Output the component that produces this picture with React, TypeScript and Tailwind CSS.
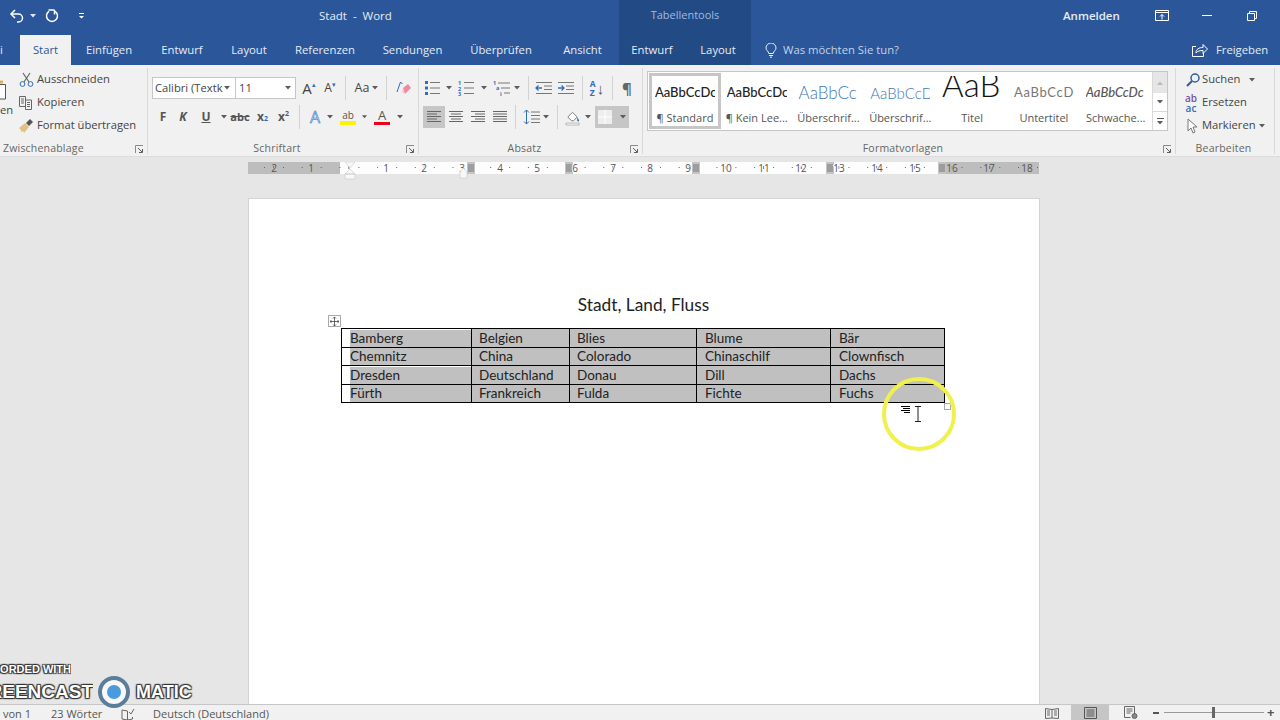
import type { ReactNode } from "react";

const ui = "font-['Open_Sans','Noto_Sans',sans-serif]";
const doc = "font-['Lato','Open_Sans',sans-serif]";

const Caret = ({ light }: { light?: boolean }) => (
  <svg width="6" height="4" viewBox="0 0 6 4">
    <path d="M0 0h6L3 3.5z" fill={light ? "#dfe7f3" : "#5c5c5c"} />
  </svg>
);

const Sep = () => <span className="block h-[24px] w-px bg-[#d2d2d2]" />;

function Slot({ className, children }: { className: string; children?: ReactNode }) {
  return <span className={`flex h-full shrink-0 items-center justify-center ${className}`}>{children}</span>;
}

function Lines({ rows, stroke = "#666" }: { rows: [number, number][]; stroke?: string }) {
  return (
    <svg width="16" height="14" viewBox="0 0 16 14">
      {rows.map(([x1, x2], i) => (
        <path key={i} d={`M${x1} ${1.5 + i * 2.5}H${x2}`} stroke={stroke} strokeWidth="1" />
      ))}
    </svg>
  );
}

function ListIcon({ marks }: { marks: string }) {
  return (
    <svg width="18" height="18" viewBox="0 0 18 18">
      <path d="M6 3.500h10M6 9h10M6 14.500h10" stroke="#777" />
      {marks === "dots" ? (
        <path d="M1 2h3v3H1zM1 7.500h3v3H1zM1 13h3v3H1z" fill="#2f6fb7" />
      ) : (
        <>
          <text x="0" y="6" fontSize="5.500" fill="#2f6fb7" fontWeight="700">1</text>
          <text x="0" y="11.500" fontSize="5.500" fill="#2f6fb7" fontWeight="700">2</text>
          <text x="0" y="17" fontSize="5.500" fill="#2f6fb7" fontWeight="700">3</text>
        </>
      )}
    </svg>
  );
}

function IndentIcon({ flip }: { flip?: boolean }) {
  return (
    <svg width="18" height="14" viewBox="0 0 18 14">
      <path d="M1 1.500h16M9 5h8M9 8.500h8M1 12.500h16" stroke="#777" />
      <path d={flip ? "M1 7h6M4.500 4.500 7 7l-2.500 2.500" : "M7 7H1M3.500 4.500 1 7l2.500 2.500"} stroke="#2f6fb7" strokeWidth="1.300" fill="none" />
    </svg>
  );
}

function Launcher() {
  return (
    <svg width="9" height="9" viewBox="0 0 9 9" className="shrink-0">
      <path d="M.5 8V.5H8" stroke="#8a8a8a" fill="none" />
      <path d="M3 3l4 4M7.500 4v3.500H4" stroke="#5c5c5c" fill="none" />
    </svg>
  );
}

function Group({ className, label, labelClass = "justify-center", launcher, children }: {
  className: string;
  label: string;
  labelClass?: string;
  launcher?: boolean;
  children: ReactNode;
}) {
  return (
    <div className={`flex shrink-0 flex-col ${className}`}>
      <div className="h-[74px] shrink-0 overflow-hidden">{children}</div>
      <div className="mt-[1px] flex h-[18px] shrink-0 items-center pr-[3px]">
        <div className={`flex flex-1 text-[10.500px] tracking-[0.2px] text-[#666] ${labelClass}`}>{label}</div>
        {launcher && <Launcher />}
      </div>
    </div>
  );
}

const divider = <span className="my-[3px] block h-[86px] w-px shrink-0 bg-[#d9d9d9]" />;

function StyleItem({ preview, label, selected }: { preview: ReactNode; label: string; selected?: boolean }) {
  return (
    <div className={`flex h-[56px] w-[71.8px] shrink-0 flex-col items-center overflow-hidden border-[3px] ${selected ? "border-[#c6c6c6]" : "border-transparent"}`}>
      <div className="flex h-[34px] w-[60px] items-center justify-start overflow-hidden whitespace-nowrap text-[#222]">{preview}</div>
      <div className="whitespace-nowrap text-[11px] leading-[16px] text-[#555]">{label}</div>
    </div>
  );
}

function Ruler() {
  const nums: [string, number][] = [
    ["2", 274], ["1", 311], ["1", 386], ["2", 424], ["3", 462], ["4", 500], ["5", 537], ["6", 575], ["7", 613],
    ["8", 650], ["9", 688], ["10", 726], ["11", 764], ["12", 801], ["13", 839], ["14", 877], ["15", 915], ["16", 952], ["17", 989], ["18", 1027],
  ];
  const markers = [467, 565, 692, 826, 938];
  return (
    <svg width="792" height="20" viewBox="248 162 792 20" className="ml-[248px] block">
      <rect x="248" y="162" width="92" height="12" fill="#bdbdbd" />
      <rect x="340" y="162" width="598" height="12" fill="#fdfdfd" />
      <rect x="938" y="162" width="101" height="12" fill="#bdbdbd" />
      {Array.from({ length: 21 }, (_, i) => 255 + i * 37.7).map((x, i) => (
        <g key={i} stroke="#666">
          <path d={`M${x + 9} 167.500h1M${x + 28} 167.500h1`} />
          <path d={`M${x + 18.500} 166v3`} />
        </g>
      ))}
      {markers.map((x) => (
        <g key={x}>
          <rect x={x} y="162" width="8" height="12" fill="#c4c4c4" />
          <path d={`M${x + 2} 164v8M${x + 4} 164v8M${x + 6} 164v8`} stroke="#777" />
        </g>
      ))}
      {nums.map(([n, x], i) => (
        <text key={i} x={x} y="171.500" fontSize="10" textAnchor="middle" fill="#555" stroke={i < 2 || i >= 17 ? "#bdbdbd" : "#fdfdfd"} strokeWidth="2" paintOrder="stroke" fontFamily="Open Sans">{n}</text>
      ))}
      <path d="M345 162h10l-5 6zM345 174h10v5h-10zM350 169l5 5h-10z" fill="#f8f8f8" stroke="#c8c8c8" strokeWidth=".6" />
      <path d="M460 172l3.500-4 3.500 4v6h-7z" fill="#f8f8f8" stroke="#c8c8c8" strokeWidth=".6" />
    </svg>
  );
}

const rows = [
  ["Bamberg", "Belgien", "Blies", "Blume", "Bär"],
  ["Chemnitz", "China", "Colorado", "Chinaschilf", "Clownfisch"],
  ["Dresden", "Deutschland", "Donau", "Dill", "Dachs"],
  ["Fürth", "Frankreich", "Fulda", "Fichte", "Fuchs"],
];
const rowHeights = ["h-[19px]", "h-[18px]", "h-[19px]", "h-[18px]"];

const tabs: [string, string][] = [
  ["Einfügen", "w-[76px]"],
  ["Entwurf", "w-[70px]"],
  ["Layout", "w-[64px]"],
  ["Referenzen", "w-[88px]"],
  ["Sendungen", "w-[87px]"],
  ["Überprüfen", "w-[90px]"],
  ["Ansicht", "w-[73px]"],
];

export default function App() {
  return (
    <div className={`relative flex h-screen w-[1280px] flex-col overflow-hidden bg-[#e6e6e6] ${ui}`}>
      {/* title bar */}
      <header className="flex h-[35px] shrink-0 bg-[#2b579a] text-[11.500px] text-[#e6ecf5]">
        <div className="flex w-[619px] items-center pb-[4px]">
          <Slot className="ml-[8px] w-[18px]">
            <svg width="16" height="14" viewBox="0 0 16 14" fill="none" stroke="#fff" strokeWidth="1.500">
              <path d="M6 1 2 5l4 4" />
              <path d="M2 5h7.500a4 4 0 0 1 0 8H8" />
            </svg>
          </Slot>
          <Slot className="ml-[3px] w-[8px]"><Caret light /></Slot>
          <Slot className="ml-[6px] w-[18px]">
            <svg width="14" height="14" viewBox="0 0 14 14" fill="none" stroke="#fff" strokeWidth="1.500">
              <path d="M4 2.300a5.500 5.500 0 1 0 6 0" />
              <path d="M3.500 1H9.500M9.500 1v4.500" />
            </svg>
          </Slot>
          <Slot className="ml-[16px] w-[8px]">
            <svg width="7" height="7" viewBox="0 0 7 7">
              <path d="M1 1h5v1H1zM1 4h5L3.500 6.500z" fill="#fff" />
            </svg>
          </Slot>
          <span className="ml-[234px] whitespace-pre">Stadt  -  Word</span>
        </div>
        <div className="flex w-[132px] items-center justify-center bg-[#224a84] pb-[4px] text-[11px] text-[#9fbbe4]">Tabellentools</div>
        <div className="flex flex-1 items-center pb-[4px]">
          <span className="ml-[312px] font-semibold text-[11.500px]">Anmelden</span>
          <Slot className="ml-[35px] w-[14px]">
            <svg width="14" height="12" viewBox="0 0 14 12" fill="none" stroke="#fff">
              <path d="M.5.500h13v10H.5zM.5 2.500h13M7 9.500V4.500M5 6.500l2-2 2 2" />
            </svg>
          </Slot>
          <Slot className="ml-[33px] w-[11px]"><span className="block h-px w-[10px] bg-white" /></Slot>
          <Slot className="ml-[34px] w-[11px]">
            <svg width="10" height="10" viewBox="0 0 10 10" fill="none" stroke="#fff">
              <path d="M.5 2.500h7v7h-7zM2.500 2.500v-2h7v7h-2" />
            </svg>
          </Slot>
        </div>
      </header>

      {/* tabs */}
      <nav className="flex h-[30px] shrink-0 items-stretch bg-[#2b579a] text-[11.300px] text-[#e6ecf5]">
        <div className="flex w-[20px] items-center justify-start overflow-hidden pl-0">i</div>
        <div className="flex w-[51px] items-center justify-center bg-[#f1f1f1] text-[#2b579a]">Start</div>
        {tabs.map(([t, w]) => (
          <div key={t} className={`flex items-center justify-center ${w}`}>{t}</div>
        ))}
        <div className="flex w-[132px] bg-[#224a84]">
          <div className="flex w-[66px] items-center justify-center">Entwurf</div>
          <div className="flex w-[66px] items-center justify-center">Layout</div>
        </div>
        <div className="ml-[14px] flex items-center text-[#c3d3ea]">
          <svg width="12" height="15" viewBox="0 0 12 15" fill="none" stroke="#fff" strokeWidth=".900">
            <path d="M3.800 10.500C3.500 8 1 7.500 1 5a5 5 0 0 1 10 0c0 2.500-2.500 3-2.800 5.500zM4 12.500h4M5 14.200h2" />
          </svg>
          <span className="ml-[6px]">Was möchten Sie tun?</span>
        </div>
        <div className="ml-[293px] flex items-center">
          <svg width="16" height="14" viewBox="0 0 16 14" fill="none" stroke="#fff">
            <path d="M4 3.500H.5v10h11V10" />
            <path d="M4 10c0-4 3-5.500 7-5.500V1.500l4.500 4.500L11 10.500V7.500C8 7.500 5.500 8 4 10z" />
          </svg>
          <span className="ml-[8px]">Freigeben</span>
        </div>
      </nav>

      {/* ribbon */}
      <section className="flex h-[92px] shrink-0 border-b border-[#dcdcdc] bg-[#f1f1f1] text-[#444]">
        <Group className="w-[147px]" label="Zwischenablage" labelClass="justify-start pl-[3px]" launcher>
          <div className="flex h-full">
            <div className="flex w-[19px] flex-col pt-[15px] text-[11.200px] text-[#444]">
              <svg width="6" height="20" viewBox="0 0 6 20">
                <path d="M0 .500h3v3H0z" fill="#d9b25f" />
                <path d="M0 4.500h5.500V19H0" fill="#fff" stroke="#555" />
              </svg>
              <span className="mt-[3px] leading-[14px]">en</span>
            </div>
            <div className="flex flex-col pt-[3px] text-[11.200px]">
              {[
                ["Ausschneiden", <svg key="c" width="15" height="15" viewBox="0 0 15 15" fill="none"><path d="M4 1l6 9M11 1 5 10" stroke="#666" strokeWidth="1.200" /><circle cx="3.500" cy="12" r="2.400" stroke="#2f6fb7" /><circle cx="11.500" cy="12" r="2.400" stroke="#2f6fb7" /></svg>],
                ["Kopieren", <svg key="k" width="15" height="14" viewBox="0 0 15 14" fill="none" stroke="#666"><path d="M.5.500h6v10h-6zM2 3h3M2 5h3M2 7h3M6.500 4h6v9.500h-6zM8 6.500h3M8 8.500h3M8 10.500h3" /></svg>],
                ["Format übertragen", <svg key="f" width="15" height="14" viewBox="0 0 15 14"><path d="M0 9l6-5 4 4-5 6-1-2-2 1 0-2z" fill="#e2c27c" /><path d="M7 4l4-4 3 3-4 4z" fill="#555" /></svg>],
              ].map(([t, icon]) => (
                <div key={t as string} className="flex h-[23px] items-center">
                  <span className="flex w-[18px] items-center justify-start">{icon}</span>
                  <span className="whitespace-nowrap">{t}</span>
                </div>
              ))}
            </div>
          </div>
        </Group>
        {divider}
        <Group className="w-[270px]" label="Schriftart" launcher>
          <div className="pl-[4px] pt-[12px]">
            <div className="flex h-[22px] items-center">
              <div className="flex h-[22px] w-[84px] items-center justify-between border border-[#c6c6c6] bg-white pl-[2px] pr-[5px] text-[11.200px]">
                <span className="w-[68px] overflow-hidden whitespace-nowrap">Calibri (Textk</span>
                <Caret />
              </div>
              <div className="flex h-[22px] w-[60px] items-center justify-between border border-l-0 border-[#c6c6c6] bg-white pl-[3px] pr-[4px] text-[11.200px]">
                <span>11</span>
                <Caret />
              </div>
              <Slot className="w-[26px] text-[15px]">A<sup className="text-[7px] text-[#2f6fb7]">▴</sup></Slot>
              <Slot className="w-[16px] text-[12px]">A<sup className="text-[7px] text-[#2f6fb7]">▾</sup></Slot>
              <Slot className="w-[14px]"><Sep /></Slot>
              <Slot className="w-[20px] text-[12.500px]">Aa</Slot>
              <Slot className="w-[6px]"><Caret /></Slot>
              <Slot className="w-[16px]"><Sep /></Slot>
              <Slot className="w-[18px]">
                <svg width="15" height="15" viewBox="0 0 15 15">
                  <path d="M7 7l5-4 3 4-6 6z" fill="#ef8aa0" />
                  <path d="M1 11 4.500 1l2 2" stroke="#2f6fb7" fill="none" />
                  <path d="M7 7l-1 4 3 2z" fill="#f5c4cf" />
                </svg>
              </Slot>
            </div>
            <div className="mt-[7px] flex h-[22px] items-center text-[12px] font-bold text-[#555]">
              <Slot className="w-[22px]">F</Slot>
              <Slot className="w-[18px] italic">K</Slot>
              <Slot className="w-[28px] underline">U</Slot>
              <Slot className="w-[8px]"><Caret /></Slot>
              <Slot className="w-[24px] text-[11px] line-through">abc</Slot>
              <Slot className="w-[21px]">x<sub className="text-[7px] text-[#2f6fb7]">2</sub></Slot>
              <Slot className="w-[21px]">x<sup className="text-[7px]">2</sup></Slot>
              <Slot className="w-[10px]"><Sep /></Slot>
              <Slot className="w-[22px] text-[16px] font-normal text-[#b9d0ec] [-webkit-text-stroke:0.5px_#2f6fb7]">A</Slot>
              <Slot className="w-[8px]"><Caret /></Slot>
              <Slot className="w-[28px]">
                <span className="flex w-[16px] flex-col items-center text-[10px] leading-[12px] font-normal text-[#555]">
                  ab
                  <span className="block h-[4px] w-[16px] bg-[#fff200]" />
                </span>
              </Slot>
              <Slot className="w-[5px]"><Caret /></Slot>
              <Slot className="w-[30px]">
                <span className="flex w-[16px] flex-col items-center text-[13px] leading-[13px] font-normal text-[#555]">
                  A
                  <span className="block h-[3px] w-[16px] bg-[#e8001c]" />
                </span>
              </Slot>
              <Slot className="w-[6px]"><Caret /></Slot>
            </div>
          </div>
        </Group>
        {divider}
        <Group className="w-[223px]" label="Absatz" launcher>
          <div className="pl-[4px] pt-[12px]">
            <div className="flex h-[22px] items-center">
              <Slot className="w-[20px]"><ListIcon marks="dots" /></Slot>
              <Slot className="w-[12px]"><Caret /></Slot>
              <Slot className="w-[24px]"><ListIcon marks="nums" /></Slot>
              <Slot className="w-[10px]"><Caret /></Slot>
              <Slot className="ml-[3px] w-[20px]">
                <svg width="18" height="18" viewBox="0 0 18 18">
                  <path d="M5 4h12M8 9h9M11 14h6" stroke="#777" />
                  <text x="0" y="6" fontSize="5.500" fill="#2f6fb7" fontWeight="700">1</text>
                  <text x="3" y="11" fontSize="5.500" fill="#2f6fb7" fontWeight="700">a</text>
                  <text x="7" y="16.500" fontSize="5.500" fill="#2f6fb7" fontWeight="700">i</text>
                </svg>
              </Slot>
              <Slot className="w-[10px]"><Caret /></Slot>
              <Slot className="w-[12px]"><Sep /></Slot>
              <Slot className="w-[20px]"><IndentIcon /></Slot>
              <Slot className="w-[24px]"><IndentIcon flip /></Slot>
              <Slot className="w-[8px]"><Sep /></Slot>
              <Slot className="w-[22px]">
                <span className="flex items-center">
                  <span className="flex flex-col text-[8.500px] leading-[9px] font-bold text-[#2f6fb7]"><span>A</span><span>Z</span></span>
                  <span className="ml-[1px] text-[15px] leading-none text-[#555]">↓</span>
                </span>
              </Slot>
              <Slot className="w-[8px]"><Sep /></Slot>
              <Slot className="w-[22px] text-[15px] font-bold text-[#666]">¶</Slot>
            </div>
            <div className="mt-[7px] flex h-[22px] items-center">
              <Slot className="w-[22px] bg-[#c6c6c6]"><Lines rows={[[1, 15], [1, 11], [1, 15], [1, 11], [1, 15]]} /></Slot>
              <Slot className="w-[22px]"><Lines rows={[[1, 15], [3, 13], [1, 15], [3, 13], [1, 15]]} /></Slot>
              <Slot className="w-[22px]"><Lines rows={[[1, 15], [5, 15], [1, 15], [5, 15], [1, 15]]} /></Slot>
              <Slot className="w-[22px]"><Lines rows={[[1, 15], [1, 15], [1, 15], [1, 15], [1, 15]]} /></Slot>
              <Slot className="w-[8px]"><Sep /></Slot>
              <Slot className="w-[24px]">
                <svg width="17" height="16" viewBox="0 0 17 16" fill="none">
                  <path d="M3.500 1v14M1 3.500 3.500 1 6 3.500M1 12.500 3.500 15 6 12.500" stroke="#2f6fb7" />
                  <path d="M8 3h9M8 6.500h9M8 10h9M8 13.500h9" stroke="#777" />
                </svg>
              </Slot>
              <Slot className="w-[6px]"><Caret /></Slot>
              <Slot className="w-[16px]"><Sep /></Slot>
              <Slot className="w-[16px]">
                <svg width="17" height="17" viewBox="0 0 17 17">
                  <path d="M3 8l5-5 5 5-4 4H7z" fill="#fff" stroke="#777" />
                  <path d="M13 8c1 2 2 3 2 4s-2 1-2 0z" fill="#2f6fb7" />
                  <path d="M1 14.500h14v2H1z" fill="#fff" stroke="#999" strokeWidth=".7" />
                </svg>
              </Slot>
              <Slot className="w-[14px]"><Caret /></Slot>
              <Slot className="w-[34px] gap-[8px] bg-[#c6c6c6]">
                <svg width="14" height="14" viewBox="0 0 14 14">
                  <path d="M0 0h14v14H0z" fill="#eee" />
                  <path d="M7 0v14M0 7h14" stroke="#fff" />
                </svg>
                <Caret />
              </Slot>
            </div>
          </div>
        </Group>
        {divider}
        <Group className="w-[532px]" label="Formatvorlagen" launcher>
          <div className="ml-[4px] mt-[6px] flex h-[60px] w-[521px] border border-[#c6c6c6] bg-white">
            <div className="flex flex-1 items-start pl-[1px] pt-[1px]">
              <StyleItem selected label="¶ Standard" preview={<span className={`${doc} text-[13px] font-medium`}>AaBbCcDc</span>} />
              <StyleItem label="¶ Kein Lee..." preview={<span className={`${doc} text-[13px] font-medium`}>AaBbCcDc</span>} />
              <StyleItem label="Überschrif..." preview={<span className={`${doc} text-[17px] font-light text-[#3f78b5]`}>AaBbCc</span>} />
              <StyleItem label="Überschrif..." preview={<span className={`${doc} text-[15px] font-light text-[#3f78b5]`}>AaBbCcD</span>} />
              <StyleItem label="Titel" preview={<span className={`${doc} relative -top-[8px] text-[33px] font-light text-[#111]`}>AaB</span>} />
              <StyleItem label="Untertitel" preview={<span className={`${doc} text-[13px] tracking-[0.7px] text-[#777]`}>AaBbCcD</span>} />
              <StyleItem label="Schwache..." preview={<span className={`${doc} text-[13px] font-medium italic text-[#555]`}>AaBbCcDc</span>} />
            </div>
            <div className="flex w-[15px] flex-col border-l border-[#d9d9d9]">
              <div className="flex h-[21px] items-center justify-center bg-[#e6e6e6]"><span className="rotate-180 opacity-30"><Caret /></span></div>
              <div className="flex h-[19px] items-center justify-center border-b border-[#d9d9d9]"><Caret /></div>
              <div className="flex flex-1 flex-col items-center justify-center gap-[2px]">
                <span className="block h-px w-[7px] bg-[#5c5c5c]" />
                <Caret />
              </div>
            </div>
          </div>
        </Group>
        {divider}
        <Group className="w-[98px]" label="Bearbeiten">
          <div className="flex flex-col pl-[7px] pt-[3px] text-[11.200px]">
            <div className="flex h-[23px] items-center">
              <span className="flex w-[19px] justify-center">
                <svg width="14" height="14" viewBox="0 0 14 14" fill="none" stroke="#2f5f9f" strokeWidth="1.500">
                  <circle cx="9" cy="5" r="4" />
                  <path d="M6 8 1 13" strokeWidth="2.200" />
                </svg>
              </span>
              <span>Suchen</span>
              <span className="ml-[9px]"><Caret /></span>
            </div>
            <div className="flex h-[23px] items-center">
              <span className="flex w-[19px] flex-col pr-[3px] text-center text-[10px] leading-[10px] font-semibold">
                <span className="text-[#7b4fa3]">ab</span>
                <span className="text-[#2f6fb7]">ac</span>
              </span>
              <span>Ersetzen</span>
            </div>
            <div className="flex h-[23px] items-center">
              <span className="flex w-[19px] justify-center">
                <svg width="12" height="16" viewBox="0 0 12 16" fill="#fff" stroke="#777">
                  <path d="M1 1v12l3-3 2 5 2-1-2-5h4z" />
                </svg>
              </span>
              <span>Markieren</span>
              <span className="ml-[3px]"><Caret /></span>
            </div>
          </div>
        </Group>
        {divider}
      </section>

      {/* document */}
      <main className="flex-1 overflow-hidden pt-[5px]">
        <Ruler />
        <div className={`ml-[248px] mt-[16px] h-[600px] w-[792px] border border-[#d4d4d4] bg-white ${doc}`}>
          <div className="pr-px pt-[94px] text-center text-[17.300px] leading-[24px] text-[#222]">Stadt, Land, Fluss</div>
          <table className="ml-[92px] mt-[11px] w-[603px] table-fixed text-[13.500px] text-[#222]">
            <colgroup>
              <col className="w-[130px]" />
              <col className="w-[98px]" />
              <col className="w-[127px]" />
              <col className="w-[134px]" />
              <col className="w-[114px]" />
            </colgroup>
            <tbody>
              {rows.map((r, i) => (
                <tr key={r[0]} className={rowHeights[i]}>
                  {r.map((c, j) => (
                    <td key={c} className={`overflow-hidden border border-black p-0 leading-[17px] ${j === 0 ? "pl-[8px]" : j < 3 ? "bg-[#c0c0c0] pl-[7px]" : "bg-[#c0c0c0] pl-[8px]"}`}>
                      {j === 0 ? <div className="bg-[#c0c0c0]">{c}</div> : c}
                    </td>
                  ))}
                </tr>
              ))}
            </tbody>
          </table>
        </div>
      </main>

      {/* status bar */}
      <footer className="flex h-[16px] shrink-0 items-center overflow-hidden border-t border-[#c6c6c6] bg-[#f1f1f1] pt-[3px] text-[11px] text-[#555]">
        <span className="ml-[3px] w-[48px] whitespace-nowrap">von 1</span>
        <span className="w-[70px] whitespace-nowrap">23 Wörter</span>
        <svg width="14" height="13" viewBox="0 0 14 13" fill="none" stroke="#666">
          <path d="M6.500 3v9L1 11V2zM6.500 12l5-1V9M8 4l2 2 3-5" />
        </svg>
        <span className="ml-[18px] w-[115px] whitespace-nowrap">Deutsch (Deutschland)</span>
        <div className="ml-[767px] -mt-[3px] flex h-[15px] items-center">
          <Slot className="w-[34px]">
            <svg width="14" height="12" viewBox="0 0 14 12" fill="none" stroke="#666">
              <path d="M.5 1.500 7 2.500l6.500-1v10L7 11 .5 11.500zM7 2.500V11M2 4h3M2 6h3M2 8h3M9 4h3M9 6h3M9 8h3" />
            </svg>
          </Slot>
          <Slot className="ml-[2px] w-[38px] bg-[#c6c6c6]">
            <svg width="13" height="12" viewBox="0 0 13 12" fill="none" stroke="#555">
              <path d="M.5.500h12v11H.5zM2.500 3h8M2.500 5h8M2.500 7h8M2.500 9h8" />
            </svg>
          </Slot>
          <Slot className="ml-[3px] w-[38px]">
            <svg width="14" height="13" viewBox="0 0 14 13" fill="none" stroke="#666">
              <path d="M.5.500h10v8M.5.500v11h6M2.500 3h6M2.500 5h6M2.500 7h4" />
              <circle cx="10.500" cy="10" r="2.500" fill="#888" />
            </svg>
          </Slot>
          <span className="ml-[3px] block h-[2px] w-[6px] shrink-0 bg-[#555]" />
          <div className="relative ml-[5px] h-px w-[100px] shrink-0 bg-[#999]">
            <span className="absolute -top-[5px] left-[48px] block h-[11px] w-[3px] bg-[#666]" />
          </div>
          <span className="ml-[3px] text-[13px] font-bold leading-none">+</span>
        </div>
      </footer>

      {/* table handles, pointer highlight */}
      <div className="absolute left-[328px] top-[315px] flex h-[12px] w-[13px] items-center justify-center border border-[#aaa] bg-white">
        <svg width="9" height="9" viewBox="0 0 9 9" fill="none" stroke="#444">
          <path d="M4.500 0v9M0 4.500h9M3 1.500 4.500 0 6 1.500M3 7.500 4.500 9 6 7.500M1.500 3 0 4.500 1.500 6M7.500 3 9 4.500 7.500 6" strokeWidth=".8" />
        </svg>
      </div>
      <div className="absolute left-[944px] top-[403px] h-[7px] w-[7px] border border-[#aaa] bg-white" />
      <div className="absolute left-[882px] top-[377px] h-[74px] w-[74px] rounded-full border-[4px] border-[#f0f04e]" />
      <div className="absolute left-[901px] top-[406px] flex flex-col items-end gap-px">
        <span className="block h-px w-[9px] bg-black" />
        <span className="block h-px w-[7px] bg-black" />
        <span className="block h-px w-[9px] bg-black" />
        <span className="block h-px w-[6px] bg-black" />
      </div>
      <svg width="8" height="16" viewBox="0 0 8 16" fill="none" stroke="#222" className="absolute left-[914px] top-[406px]">
        <path d="M1 .500h6M4 .500v15M1 15.500h6" />
      </svg>

      {/* recorder watermark */}
      <div className="absolute left-0 top-[660px] font-['Liberation_Sans',sans-serif] font-bold text-white [text-shadow:1px_1px_1px_#333,-1px_-1px_1px_#333,1px_-1px_1px_#333,-1px_1px_1px_#333]">
        <div className="flex h-[18px] w-[71px] items-center justify-end overflow-hidden text-[11px] whitespace-nowrap">RECORDED WITH</div>
        <div className="-mt-[2px] flex items-center">
          <div className="flex h-[26px] w-[93px] items-center justify-end overflow-hidden text-[19px] whitespace-nowrap">SCREENCAST</div>
          <span className="ml-[5px] flex h-[32px] w-[32px] items-center justify-center rounded-full border-[4px] border-[#5b7d99] bg-white/70">
            <span className="block h-[14px] w-[14px] rounded-full bg-[#4a9ade]" />
          </span>
          <span className="ml-[6px] text-[18px] leading-[26px]">MATIC</span>
        </div>
      </div>
    </div>
  );
}
